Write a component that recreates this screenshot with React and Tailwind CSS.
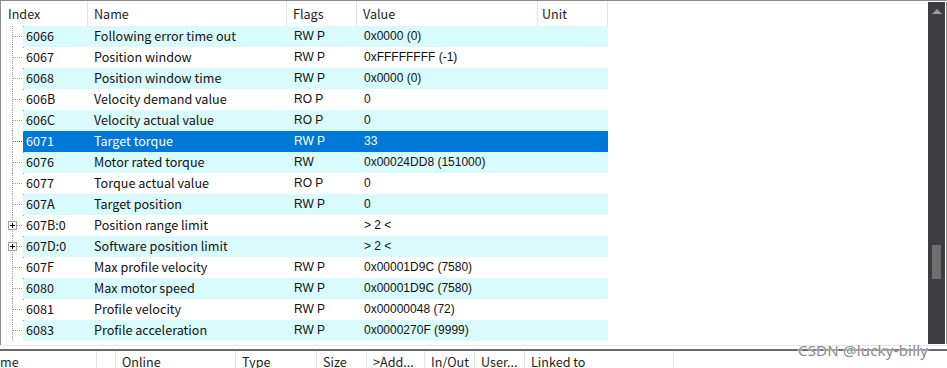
import React from "react";

const rows = [
  { idx: "6066", name: "Following error time out", flags: "RW P", value: "0x0000 (0)" },
  { idx: "6067", name: "Position window", flags: "RW P", value: "0xFFFFFFFF (-1)" },
  { idx: "6068", name: "Position window time", flags: "RW P", value: "0x0000 (0)" },
  { idx: "606B", name: "Velocity demand value", flags: "RO P", value: "0" },
  { idx: "606C", name: "Velocity actual value", flags: "RO P", value: "0" },
  { idx: "6071", name: "Target torque", flags: "RW P", value: "33", selected: true },
  { idx: "6076", name: "Motor rated torque", flags: "RW", value: "0x00024DD8 (151000)" },
  { idx: "6077", name: "Torque actual value", flags: "RO P", value: "0" },
  { idx: "607A", name: "Target position", flags: "RW P", value: "0" },
  { idx: "607B:0", name: "Position range limit", flags: "", value: "> 2 <", plus: true },
  { idx: "607D:0", name: "Software position limit", flags: "", value: "> 2 <", plus: true },
  { idx: "607F", name: "Max profile velocity", flags: "RW P", value: "0x00001D9C (7580)" },
  { idx: "6080", name: "Max motor speed", flags: "RW P", value: "0x00001D9C (7580)" },
  { idx: "6081", name: "Profile velocity", flags: "RW P", value: "0x00000048 (72)" },
  { idx: "6083", name: "Profile acceleration", flags: "RW P", value: "0x0000270F (9999)" },
];

const bottomCols = [
  { label: "me", w: "w-[97px]" },
  { label: "", w: "w-[19px]" },
  { label: "Online", w: "w-[120px]" },
  { label: "Type", w: "w-[81px]" },
  { label: "Size", w: "w-[50px]" },
  { label: ">Add...", w: "w-[58px]" },
  { label: "In/Out", w: "w-[50px]" },
  { label: "User...", w: "w-[50px]" },
  { label: "Linked to", w: "w-[149px]" },
];

function TreeBranch({ plus, selected }) {
  return (
    <div className="relative w-[22px] h-full shrink-0">
      <div className="absolute left-[11px] top-0 bottom-0 border-l border-dotted border-[#a0a0a0]" />
      <div
        className={`absolute left-[12px] top-[10px] w-[9px] border-t border-dotted ${
          selected ? "border-[#0078d7]" : "border-[#a0a0a0]"
        }`}
      />
      {plus && (
        <div className="absolute left-[7px] top-[6px] w-[9px] h-[9px] bg-white border border-[#a0a0a0] flex items-center justify-center">
          <div className="absolute w-[5px] h-px bg-black" />
          <div className="absolute w-px h-[5px] bg-black" />
        </div>
      )}
      <div className="absolute left-[22px] top-0 w-px h-px bg-[#2ed8e0]" />
    </div>
  );
}

export default function App() {
  return (
    <div className="w-[947px] h-[368px] bg-white overflow-hidden relative flex flex-col font-['Noto_Sans_CJK_SC','Liberation_Sans',sans-serif] text-[12.6px] text-[#111]">
      {/* upper panel */}
      <div className="h-[345px] flex border-t border-l border-[#8c8c8c] shrink-0">
        <div className="flex-1 flex flex-col">
          {/* header */}
          <div className="h-[25px] flex items-center text-[#1e1e1e] leading-[16px]">
            <div className="w-[87px] pl-[7px] h-full flex items-center border-r border-[#e3e3e3]">Index</div>
            <div className="w-[199px] pl-[6px] h-full flex items-center border-r border-[#e3e3e3]">Name</div>
            <div className="w-[70px] pl-[6px] h-full flex items-center border-r border-[#e3e3e3]">Flags</div>
            <div className="w-[181px] pl-[6px] h-full flex items-center border-r border-[#e3e3e3]">Value</div>
            <div className="w-[70px] pl-[4px] h-full flex items-center border-r border-[#e3e3e3]">Unit</div>
          </div>
          {/* rows */}
          <div className="flex flex-col">
            {rows.map((r, i) => {
              const bg = r.selected ? "bg-[#0078d7] text-white" : i % 2 === 0 ? "bg-[#d9fbfb]" : "bg-white";
              return (
                <div key={r.idx} className="h-[21px] flex">
                  <TreeBranch plus={r.plus} selected={r.selected} />
                  <div className={`w-[585px] h-full flex items-center pb-px leading-[16px] ${bg}`}>
                    <div className="w-[65px] pl-[3px]">{r.idx}</div>
                    <div className="w-[199px] pl-[6px]">{r.name}</div>
                    <div className="w-[70px] pl-[7px] text-[12px] font-['Liberation_Sans',sans-serif]">{r.flags}</div>
                    <div className="w-[181px] pl-[7px] text-[12px] font-['Liberation_Sans',sans-serif]">{r.value}</div>
                    <div className="w-[70px]" />
                  </div>
                </div>
              );
            })}
          </div>
        </div>
        {/* scrollbar */}
        <div className="w-[19px] flex pt-[1px] pb-[1px]">
          <div className="w-[17px] bg-[#3e3d42] flex flex-col items-center pt-[7px]">
            <div className="w-0 h-0 border-l-[5px] border-r-[5px] border-b-[5px] border-l-transparent border-r-transparent border-b-[#9a9a9a]" />
            <div className="mt-[231px] w-[9px] h-[34px] bg-[#6e6e6e]" />
          </div>
          <div className="w-px bg-white" />
          <div className="w-px bg-[#8c8c8c]" />
        </div>
      </div>
      {/* splitter */}
      <div className="h-px bg-[#e6e6e6] shrink-0" />
      <div className="h-[3px] bg-white shrink-0" />
      <div className="h-[2px] bg-[#6a6a6a] shrink-0" />
      {/* bottom panel header */}
      <div className="flex-1 flex text-[#1e1e1e]">
        {bottomCols.map((c, i) => (
          <div key={i} className={`${c.w} h-full pl-[6px] pt-[3px] border-r border-[#e3e3e3] first:pl-0 leading-[16px]`}>
            {c.label}
          </div>
        ))}
      </div>
      {/* watermark */}
      <div className="absolute left-[798px] top-[339px] text-[15px] text-[#8a8a8a] font-['Noto_Sans',sans-serif] [text-shadow:0_0_2px_#fff,0_0_2px_#fff] tracking-[0.2px]">
        CSDN @lucky-billy
      </div>
    </div>
  );
}
